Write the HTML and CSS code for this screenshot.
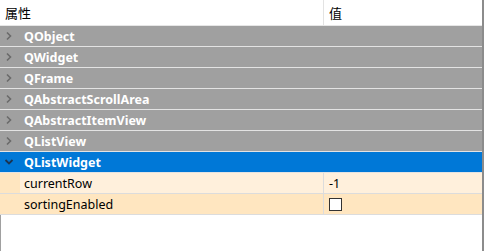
FILE: index.html
```html
<!DOCTYPE html>
<html>
<head>
<meta charset="utf-8">
<link rel="stylesheet" href="styles.css">
</head>
<body>
<div class="frame">
  <div class="header">
    <div class="hcell c1">属性</div>
    <div class="hcell c2">值</div>
  </div>
  <div class="group"><span class="chev"><svg width="8" height="10" viewBox="0 0 8 10"><path d="M2 1.5 L5.5 5 L2 8.5" fill="none" stroke="currentColor" stroke-width="1.6"/></svg></span>QObject</div>
  <div class="group"><span class="chev"><svg width="8" height="10" viewBox="0 0 8 10"><path d="M2 1.5 L5.5 5 L2 8.5" fill="none" stroke="currentColor" stroke-width="1.6"/></svg></span>QWidget</div>
  <div class="group"><span class="chev"><svg width="8" height="10" viewBox="0 0 8 10"><path d="M2 1.5 L5.5 5 L2 8.5" fill="none" stroke="currentColor" stroke-width="1.6"/></svg></span>QFrame</div>
  <div class="group"><span class="chev"><svg width="8" height="10" viewBox="0 0 8 10"><path d="M2 1.5 L5.5 5 L2 8.5" fill="none" stroke="currentColor" stroke-width="1.6"/></svg></span>QAbstractScrollArea</div>
  <div class="group"><span class="chev"><svg width="8" height="10" viewBox="0 0 8 10"><path d="M2 1.5 L5.5 5 L2 8.5" fill="none" stroke="currentColor" stroke-width="1.6"/></svg></span>QAbstractItemView</div>
  <div class="group"><span class="chev"><svg width="8" height="10" viewBox="0 0 8 10"><path d="M2 1.5 L5.5 5 L2 8.5" fill="none" stroke="currentColor" stroke-width="1.6"/></svg></span>QListView</div>
  <div class="group selected"><span class="chev"><svg width="10" height="8" viewBox="0 0 10 8"><path d="M1.5 2 L5 5.5 L8.5 2" fill="none" stroke="currentColor" stroke-width="1.8"/></svg></span>QListWidget</div>
  <div class="prop odd">
    <div class="indent"></div>
    <div class="pname">currentRow</div>
    <div class="pval">-1</div>
  </div>
  <div class="prop even">
    <div class="indent"></div>
    <div class="pname">sortingEnabled</div>
    <div class="pval"><span class="check"></span></div>
  </div>
  <div class="filler"></div>
</div>
</body>
</html>
```
FILE: styles.css
```css
html, body {
  margin: 0;
  padding: 0;
  background: #ffffff;
}
body {
  width: 484px;
  height: 251px;
  overflow: hidden;
  font-family: "Noto Sans", "Noto Sans CJK SC", sans-serif;
  font-size: 12.5px;
  color: #000;
}
.frame {
  display: flex;
  flex-direction: column;
  height: 251px;
  box-sizing: border-box;
  border-right: 2px solid #8c8c8c;
}
.header {
  display: flex;
  height: 25px;
  border-bottom: 1px solid #e6e6e6;
  background: #fff;
  flex: none;
}
.hcell {
  display: flex;
  align-items: center;
  font-family: "Noto Sans CJK SC", sans-serif;
  font-size: 13px;
}
.c1 {
  width: 324px;
  padding-left: 5px;
  box-sizing: border-box;
  border-right: 1px solid #e3e3e3;
}
.c2 {
  padding-left: 5px;
}
.group {
  display: flex;
  align-items: center;
  height: 20px;
  flex: none;
  background: #a0a0a0;
  border-bottom: 1px solid #e3e3e3;
  color: #fff;
  font-weight: bold;
  font-size: 12.5px;
}
.chev {
  width: 24px;
  display: flex;
  align-items: center;
  justify-content: flex-start;
  padding-left: 5px;
  box-sizing: border-box;
  color: #6a6a6a;
}
.group.selected {
  background: #0078d7;
}
.group.selected .chev {
  color: #1b3450;
  padding-left: 4px;
}
.prop {
  display: flex;
  height: 20px;
  flex: none;
  border-bottom: 1px solid #dcdcdc;
  align-items: stretch;
}
.prop.odd { background: #fff0dc; }
.prop.even { background: #ffe6c0; }
.indent {
  width: 20px;
  background: #ffe6c0;
}
.pname {
  width: 304px;
  box-sizing: border-box;
  padding-left: 4px;
  display: flex;
  align-items: center;
  border-right: 1px solid #dcdcdc;
}
.pval {
  display: flex;
  align-items: center;
  padding-left: 5px;
}
.check {
  width: 11px;
  height: 11px;
  border: 1px solid #333;
  background: #fff;
  display: block;
}
.filler {
  flex: 1;
  border-left: 1px solid #a0a0a0;
}
```
